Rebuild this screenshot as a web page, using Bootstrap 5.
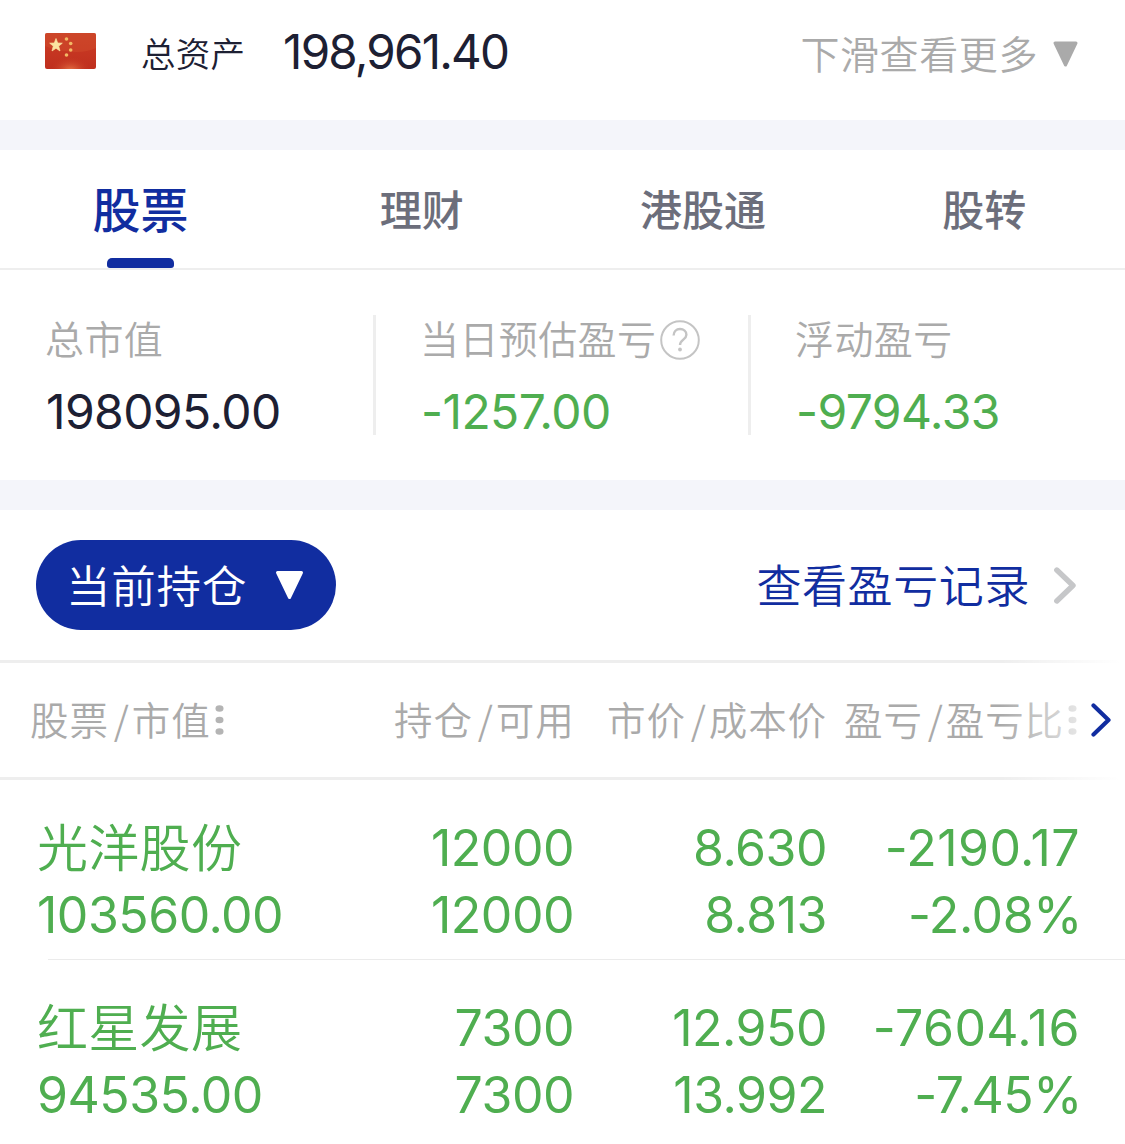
<!DOCTYPE html>
<html lang="zh-CN">
<head>
<meta charset="utf-8">
<meta name="viewport" content="width=device-width, initial-scale=1">
<title>持仓</title>
<link href="https://cdn.jsdelivr.net/npm/bootstrap@5.3.0/dist/css/bootstrap.min.css" rel="stylesheet">
<style>
  :root { --brand: #112da0; --muted: #aaaaaa; --ink: #1d2033; --down: #4fae50; --rule: #eeeeee; }
  body { font-family: Inter, "Noto Sans CJK SC", sans-serif; color: var(--ink); background: #fff; line-height: 1; overflow: hidden; }
  .zh { font-family: "Noto Sans CJK SC", sans-serif; font-weight: 350; white-space: nowrap; }
  .soft { color: var(--muted); }
  .down { color: var(--down); }
  .asset-bar { height: 120px; padding: 0 47px 17px 45px; }
  .asset-name { font-size: 34.5px; letter-spacing: .2px; margin-left: 45px; padding-top: 2px; }
  .asset-sum { font-size: 47.5px; margin-left: 38px; letter-spacing: -1.8px; }
  .more { font-size: 39px; letter-spacing: .6px; padding-top: 1px; }
  .more + svg { margin-left: 15px; }
  .band { height: 30px; background: #f4f5fa; }
  .tabs { height: 120px; border-bottom: 2px solid var(--rule); }
  .tabs .nav-link { height: 118px; padding: 0 0 3px; border-radius: 0; font-weight: 500; font-size: 42px; color: #6c6e7b; }
  .tabs .nav-link.active { padding: 5px 0 0; font-size: 48px; color: var(--brand); background: none; }
  .tab-mark { width: 67px; height: 10px; border-radius: 5px 5px 3px 3px; background: var(--brand); }
  .stats { height: 210px; padding-top: 45px; }
  .stat { height: 120px; padding-left: 46px; }
  .stat + .stat { margin-left: -2px; border-left: 3px solid var(--rule); padding-left: 45px; }
  .stat + .stat + .stat { margin-left: 0; }
  .stat-label { font-size: 39px; letter-spacing: .4px; height: 50px; padding-bottom: 6px; margin-left: -1px; }
  .stat-label svg { margin: 5px 0 0 4px; }
  .stat-value { font-size: 48px; height: 94px; letter-spacing: -.6px; }
  .filter-bar { height: 150px; padding: 0 49px 0 36px; }
  .pill { width: 300px; height: 90px; padding: 0 32px 0 30px; background: var(--brand); color: #fff; border: 0; font-size: 44.5px; letter-spacing: .8px; }
  .pill:hover { background: var(--brand); color: #fff; }
  .log-link { font-size: 45px; letter-spacing: .6px; color: var(--brand); }
  .pill span { padding-bottom: 2px; }
  .log-link span { padding-bottom: 3px; }
  .heads span.label { padding-bottom: 4px; }
  .heads { height: 120px; border-top: 3px solid var(--rule); border-bottom: 3px solid var(--rule); font-size: 38.5px; letter-spacing: .9px; padding-left: 30px; }
  .slash { padding: 0 2px 0 5px; }
  .fade-edge { right: 0; top: -3px; width: 125px; height: 120px; background: linear-gradient(90deg, rgba(255,255,255,0), #fff 96%); }
  .fade-edge svg { margin-right: 14px; }
  .h1c { width: 364px; } .h2c { width: 213px; } .h3c { width: 237px; }
  .holding { height: 180px; padding: 34px 46px 0 37px; font-size: 50px; letter-spacing: -.5px; }
  .holding + .holding::before { content: ""; position: absolute; left: 48px; right: 0; top: -1px; height: 1px; background: #ebebeb; }
  .holding .line { height: 67px; }
  .c1, .c2, .c3, .c4 { flex: none; }
  .c1 { width: 286px; } .c2 { width: 251px; } .c3 { width: 253px; } .c4 { width: 253px; letter-spacing: .4px; }
  .c4.pct { width: 255px; letter-spacing: -.4px; }
  .stock { font-size: 51px; letter-spacing: .3px; padding-bottom: 4px; }
  svg { display: block; flex: none; }
</style>
</head>
<body>
<header class="asset-bar d-flex align-items-center">
  <svg width="51" height="37" viewBox="0 0 51 37">
    <defs>
      <linearGradient id="fl" x1="0" y1="0" x2="0" y2="1"><stop offset="0" stop-color="#c84026"/><stop offset=".45" stop-color="#c63722"/><stop offset="1" stop-color="#bf2f1e"/></linearGradient>
      <radialGradient id="gl" cx=".5" cy="1.05" r=".4"><stop offset="0" stop-color="#e8794a"/><stop offset="1" stop-color="#c5351f" stop-opacity="0"/></radialGradient>
    </defs>
    <rect width="51" height="36" rx="2" fill="url(#fl)"/>
    <path d="M0 2Q0 0 2 0H49Q51 0 51 2V15Q38 21 20 18Q8 17 0 13Z" fill="#d04a2b" opacity=".55"/>
    <rect width="51" height="36" rx="2" fill="url(#gl)"/>
    <path d="M11 5.500l1.700 4.500 4.600.2-3.600 2.900 1.300 4.900-4-2.800-4 2.800 1.300-4.900L4.700 10.200l4.600-.2z" fill="#fbe4a0" stroke="#fbe4a0" stroke-width=".7" stroke-linejoin="round"/>
    <g fill="#f2b965"><circle cx="21.500" cy="6" r="1.800"/><circle cx="25.700" cy="10.500" r="1.800"/><circle cx="25.700" cy="17" r="1.800"/><circle cx="21.500" cy="22" r="1.800"/></g>
  </svg>
  <span class="zh asset-name">总资产</span>
  <span class="asset-sum">198,961.40</span>
  <span class="zh soft more ms-auto">下滑查看更多</span>
  <svg class="mt-1" width="25" height="26" viewBox="0 0 25 26"><path d="M2 2H23L12.500 24Z" fill="#aaa" stroke="#aaa" stroke-width="3" stroke-linejoin="round"/></svg>
</header>
<div class="band"></div>
<nav class="tabs nav nav-fill flex-nowrap zh">
  <a class="nav-link active w-25 d-flex flex-column align-items-center justify-content-between" href="#"><span class="flex-grow-1 d-flex align-items-center">股票</span><span class="tab-mark"></span></a>
  <a class="nav-link w-25 d-flex align-items-center justify-content-center" href="#">理财</a>
  <a class="nav-link w-25 d-flex align-items-center justify-content-center" href="#">港股通</a>
  <a class="nav-link w-25 d-flex align-items-center justify-content-center" href="#">股转</a>
</nav>
<section class="stats row g-0 align-items-start">
  <div class="stat col-4">
    <div class="stat-label zh soft d-flex align-items-center">总市值</div>
    <div class="stat-value d-flex align-items-center">198095.00</div>
  </div>
  <div class="stat col-4">
    <div class="stat-label zh soft d-flex align-items-center">当日预估盈亏
      <svg width="40" height="40" viewBox="0 0 40 40" fill="none" stroke="#c4c4c4" stroke-width="2"><circle cx="20" cy="20" r="18.800"/><path d="M13.600 15.500C13.600 11.500 16.300 9 20 9s6.400 2.400 6.400 5.700c0 4.800-6.400 5.100-6.400 10.300" stroke-width="2.400"/><circle cx="20" cy="29.500" r="1.900" fill="#c4c4c4" stroke="none"/></svg>
    </div>
    <div class="stat-value down d-flex align-items-center">-1257.00</div>
  </div>
  <div class="stat col-4">
    <div class="stat-label zh soft d-flex align-items-center">浮动盈亏</div>
    <div class="stat-value down d-flex align-items-center">-9794.33</div>
  </div>
</section>
<div class="band"></div>
<section class="filter-bar d-flex align-items-center justify-content-between">
  <button class="pill btn rounded-pill zh d-flex align-items-center justify-content-between" type="button"><span>当前持仓</span>
    <svg width="29" height="30" viewBox="0 0 29 30"><path d="M2.500 2.500H26.500L14.500 27.500Z" fill="#fff" stroke="#fff" stroke-width="3" stroke-linejoin="round"/></svg>
  </button>
  <a class="log-link zh d-flex align-items-center text-decoration-none" href="#"><span>查看盈亏记录</span>
    <svg class="ms-4" width="22" height="37" viewBox="0 0 22 37"><path d="M2.800 3L19 18.500L2.800 34" fill="none" stroke="#c6c7c9" stroke-width="5.400" stroke-linecap="round" stroke-linejoin="round"/></svg>
  </a>
</section>
<section>
  <div class="heads zh soft d-flex align-items-center position-relative">
    <div class="h1c d-flex align-items-center"><span class="label">股票<span class="slash">/</span>市值</span>
      <svg class="ms-1" width="9" height="30" viewBox="0 0 9 30" fill="#b4b4b4"><ellipse cx="4.500" cy="3.500" rx="4" ry="3.200"/><ellipse cx="4.500" cy="15" rx="4" ry="3.200"/><ellipse cx="4.500" cy="26.500" rx="4" ry="3.200"/></svg>
    </div>
    <div class="h2c d-flex"><span class="label">持仓<span class="slash">/</span>可用</span></div>
    <div class="h3c d-flex"><span class="label">市价<span class="slash">/</span>成本价</span></div>
    <div class="d-flex align-items-center"><span class="label">盈亏<span class="slash">/</span>盈亏比</span>
      <svg class="ms-1" width="9" height="30" viewBox="0 0 9 30" fill="#b4b4b4"><ellipse cx="4.500" cy="3.500" rx="4" ry="3.200"/><ellipse cx="4.500" cy="15" rx="4" ry="3.200"/><ellipse cx="4.500" cy="26.500" rx="4" ry="3.200"/></svg>
    </div>
    <div class="fade-edge position-absolute d-flex align-items-center justify-content-end">
      <svg width="20" height="34" viewBox="0 0 20 34"><path d="M2.500 2.500L17.500 17L2.500 31.500" fill="none" stroke="#112da0" stroke-width="4.200" stroke-linecap="round" stroke-linejoin="round"/></svg>
    </div>
  </div>
  <div class="holding down position-relative">
    <div class="line d-flex align-items-center"><span class="c1 zh stock">光洋股份</span><span class="c2 text-end">12000</span><span class="c3 text-end">8.630</span><span class="c4 text-end">-2190.17</span></div>
    <div class="line d-flex align-items-center"><span class="c1">103560.00</span><span class="c2 text-end">12000</span><span class="c3 text-end">8.813</span><span class="c4 pct text-end">-2.08%</span></div>
  </div>
  <div class="holding down position-relative">
    <div class="line d-flex align-items-center"><span class="c1 zh stock">红星发展</span><span class="c2 text-end">7300</span><span class="c3 text-end">12.950</span><span class="c4 text-end">-7604.16</span></div>
    <div class="line d-flex align-items-center"><span class="c1">94535.00</span><span class="c2 text-end">7300</span><span class="c3 text-end">13.992</span><span class="c4 pct text-end">-7.45%</span></div>
  </div>
</section>
<script src="https://cdn.jsdelivr.net/npm/bootstrap@5.3.0/dist/js/bootstrap.bundle.min.js"></script>
</body>
</html>
